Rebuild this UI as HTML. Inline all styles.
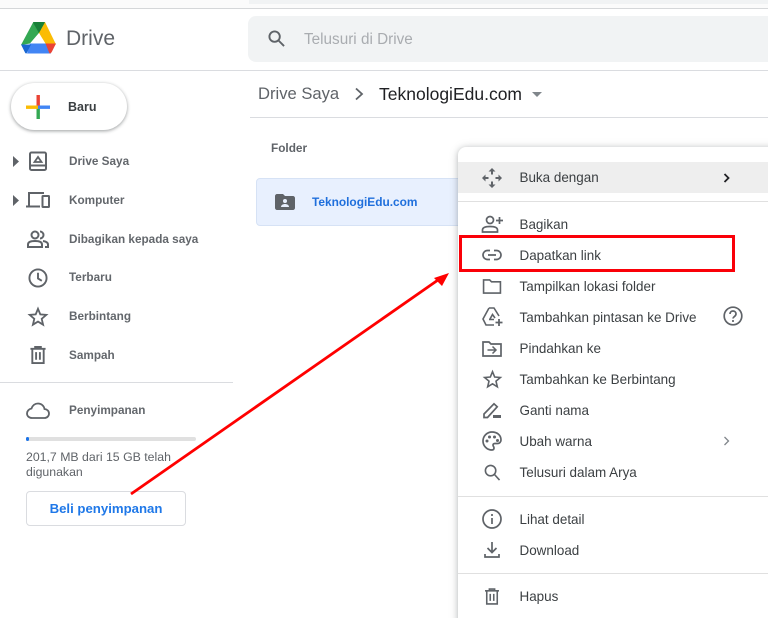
<!DOCTYPE html>
<html><head><meta charset="utf-8">
<style>
html,body{margin:0;padding:0;background:#fff}
#p{position:relative;width:768px;height:618px;overflow:hidden;background:#fff;font-family:"Liberation Sans",sans-serif}
.a{position:absolute}
.t{position:absolute;white-space:nowrap;line-height:16px}
.s{font-size:11.75px;font-weight:bold;color:#63676c;left:69px}
.m{font-size:13.45px;color:#3c4043;left:519.5px}
svg{position:absolute;overflow:visible}
</style></head><body><div id="p">

<!-- top -->
<div class="a" style="left:0;top:0;width:768px;height:8px;background:#fbfbfb"></div>
<div class="a" style="left:249px;top:0;width:519px;height:4px;background:#f1f3f4"></div>
<div class="a" style="left:0;top:8px;width:768px;height:1px;background:#d5d7d9"></div>
<div class="a" style="left:0;top:70px;width:768px;height:1px;background:#dadce0"></div>

<!-- logo -->
<svg style="left:21px;top:22px" width="35" height="32" viewBox="0 0 35 32">
<path d="M18 0H24L35 22.500H24L18 11Z" fill="#fbbc04"/>
<path d="M0 23L11.500 1.500Q12 .5 13 0H18V11L9 21.500Z" fill="#34a853"/>
<path d="M11.800 .3Q12.500 0 13.500 0H22.500Q23.500 0 24 .3L18 11Z" fill="#188038"/>
<path d="M18 11L24.500 21.500H9Z" fill="#fff"/>
<path d="M9 21.500H26L30 31.500H6Z" fill="#4285f4"/>
<path d="M24.500 21.500H35L31 29.500Q30 31.500 28.500 31.500Z" fill="#ea4335"/>
<path d="M0 22.500H10L5.500 31.500H5Q4 31 3.500 29.500Z" fill="#1967d2"/>
</svg>
<div class="t" style="left:66px;top:26px;font-size:21px;line-height:26px;color:#5f6368">Drive</div>

<!-- search -->
<div class="a" style="left:248px;top:16px;width:530px;height:46px;background:#f1f3f4;border-radius:8px"></div>
<svg style="left:268px;top:30px" width="17" height="17" viewBox="0 0 18 18" fill="none" stroke="#5f6368" stroke-width="2"><circle cx="7" cy="7" r="5.500"/><path d="M11 11l6 6"/></svg>
<div class="t" style="left:304px;top:32px;font-size:15.300px;color:#a9acb0">Telusuri di Drive</div>

<!-- new button -->
<div class="a" style="left:11px;top:83px;width:116px;height:47px;background:#fff;border-radius:24px;box-shadow:0 1px 3px rgba(60,64,67,.4),0 1px 4px rgba(60,64,67,.15)"></div>
<svg style="left:26px;top:95px" width="24" height="24" viewBox="0 0 24 24">
<rect x="10.500" y="0" width="3.400" height="12" fill="#ea4335"/>
<rect x="10.500" y="12" width="3.400" height="12" fill="#34a853"/>
<rect x="0" y="10.500" width="12" height="3.400" fill="#fbbc04"/>
<rect x="12" y="10.500" width="12" height="3.400" fill="#4285f4"/>
</svg>
<div class="t" style="left:68px;top:99px;font-size:12.500px;font-weight:bold;color:#3c4043">Baru</div>

<!-- sidebar -->
<svg style="left:13px;top:156px" width="6" height="50" viewBox="0 0 6 50" fill="#5f6368"><path d="M0 0l6 5.500-6 5.500zM0 39l6 5.500-6 5.500z"/></svg>
<svg style="left:28px;top:151px" width="20" height="20" viewBox="0 0 20 20" fill="none" stroke="#5f6368" stroke-width="2"><rect x="2" y="1.500" width="16" height="17.500" rx="1.500"/><path d="M2 14.500h16"/><path d="M6.500 11l3.500-5 3.500 5z" stroke-width="1.800"/></svg>
<svg style="left:26px;top:191px" width="24" height="18" viewBox="0 0 24 18" fill="none" stroke="#5f6368" stroke-width="2"><path d="M3 15V2h15"/><path d="M0 15.500h14" stroke-width="2"/><rect x="16.500" y="5" width="6.500" height="11" rx=".5"/></svg>
<svg style="left:27px;top:230px" width="22" height="18" viewBox="0 0 22 18" fill="none" stroke="#5f6368" stroke-width="2"><circle cx="8" cy="5" r="3.500"/><path d="M1 17v-2.500c0-2.500 3-3.500 7-3.500s7 1 7 3.500V17z"/><path d="M13 1.500a3.500 3.500 0 010 7M16 11c3 .5 5 1.500 5 3.500V17h-3"/></svg>
<svg style="left:28px;top:268px" width="20" height="20" viewBox="0 0 21 21" fill="none" stroke="#5f6368" stroke-width="2"><circle cx="10.500" cy="10.500" r="9"/><path d="M10.500 5v6l4 2.500"/></svg>
<svg style="left:28px;top:307px" width="20" height="19" viewBox="0 0 20 19" fill="none" stroke="#5f6368" stroke-width="1.800"><path d="M10 1.800l2.300 5.600 6 .5-4.600 3.900 1.400 5.900L10 14.600l-5.100 3.100 1.400-5.900L1.700 7.900l6-.5z"/></svg>
<svg style="left:30px;top:346px" width="16" height="18" viewBox="0 0 16 19" fill="none" stroke="#5f6368" stroke-width="2"><path d="M0 3h16M5 3V1h6v2"/><path d="M2 3v15h12V3M6 6.500v8M10 6.500v8"/></svg>

<div class="t s" style="top:154px">Drive Saya</div>
<div class="t s" style="top:193px">Komputer</div>
<div class="t s" style="top:232px">Dibagikan kepada saya</div>
<div class="t s" style="top:270px">Terbaru</div>
<div class="t s" style="top:309px">Berbintang</div>
<div class="t s" style="top:348px">Sampah</div>

<div class="a" style="left:0;top:382px;width:233px;height:1px;background:#dadce0"></div>

<svg style="left:26px;top:402px" width="24" height="17" viewBox="0 0 24 17" fill="none" stroke="#5f6368" stroke-width="1.800"><path d="M6 16C3 16 1 14 1 11.500S3 7 5.500 6.500C6.500 3.500 9 1.500 12 1.500c3.500 0 6 2.500 6.500 5.500 2.500.2 4.500 2 4.500 4.500S21 16 18.500 16z"/></svg>
<div class="t s" style="top:403px">Penyimpanan</div>

<div class="a" style="left:26px;top:437px;width:170px;height:4px;background:#e0e0e0;border-radius:2px"></div>
<div class="a" style="left:26px;top:437px;width:3px;height:4px;background:#1a73e8;border-radius:2px"></div>
<div class="t" style="left:26px;top:450px;font-size:12.300px;line-height:14.500px;color:#5f6368;white-space:normal;width:165px">201,7 MB dari 15 GB telah digunakan</div>

<div class="a" style="left:26px;top:491px;width:158px;height:33px;border:1px solid #dadce0;border-radius:4px;background:#fff"></div>
<div class="t" style="left:26px;width:160px;text-align:center;top:501px;font-size:13.200px;font-weight:bold;color:#1f78e8">Beli penyimpanan</div>

<!-- breadcrumb -->
<div class="t" style="left:258px;top:83px;font-size:16.600px;line-height:22px;color:#5f6368">Drive Saya</div>
<svg style="left:354px;top:87px" width="10" height="14" viewBox="0 0 10 14" fill="none" stroke="#5f6368" stroke-width="1.800"><path d="M2 1.500L8 7 2 12.500"/></svg>
<div class="t" style="left:379px;top:83px;font-size:17.500px;line-height:22px;color:#202124">TeknologiEdu.com</div>
<svg style="left:532px;top:92px" width="10" height="5" viewBox="0 0 10 5" fill="#80868b"><path d="M0 0h10L5 5z"/></svg>
<div class="a" style="left:250px;top:117px;width:518px;height:1px;background:#dadce0"></div>

<div class="t" style="left:271px;top:140px;font-size:11.800px;font-weight:bold;color:#5f6368">Folder</div>

<div class="a" style="left:256px;top:178px;width:240px;height:48px;background:#e8f0fe;border:1px solid #d6e2f5;border-radius:4px;box-sizing:border-box"></div>
<svg style="left:275px;top:194px" width="20" height="16" viewBox="0 0 20 16"><path d="M2 0h6l2 2h8c1 0 2 1 2 2v10c0 1-1 2-2 2H2c-1 0-2-1-2-2V2C0 1 1 0 2 0z" fill="#5f6368"/><circle cx="10" cy="7" r="2" fill="#e8f0fe"/><path d="M6 13c0-2 2-3 4-3s4 1 4 3z" fill="#e8f0fe"/></svg>
<div class="t" style="left:312px;top:194px;font-size:11.900px;font-weight:bold;color:#1f6fdc">TeknologiEdu.com</div>

<!-- menu -->
<div class="a" style="left:458px;top:147px;width:330px;height:490px;background:#fff;border-radius:8px;box-shadow:0 1px 6px rgba(60,64,67,.28),0 1px 10px rgba(60,64,67,.15)"></div>
<div class="a" style="left:458px;top:162px;width:310px;height:31px;background:#eeeeee"></div>
<div class="a" style="left:458px;top:201px;width:310px;height:1px;background:#e0e0e0"></div>
<div class="a" style="left:458px;top:496px;width:310px;height:1px;background:#e0e0e0"></div>
<div class="a" style="left:458px;top:573px;width:310px;height:1px;background:#e0e0e0"></div>

<svg style="left:482px;top:168px" width="20" height="20" viewBox="0 0 20 20" fill="#5f6368"><path d="M10 0l3.500 3.500h-2.500v3h-2v-3H6.500zM10 20l-3.500-3.500H9v-3h2v3h2.500zM0 10l3.500-3.500V9h3v2h-3v2.500zM20 10l-3.500 3.500V11h-3V9h3V6.500z"/></svg>
<svg style="left:481px;top:215px" width="22" height="18" viewBox="0 0 22 18" fill="none" stroke="#5f6368" stroke-width="1.700"><circle cx="9" cy="5" r="3.500"/><path d="M1.500 17v-2c0-2.500 3.500-3.500 7.500-3.500s7.500 1 7.500 3.500v2z"/><path d="M18.500 2v7M15 5.500h7"/></svg>
<svg style="left:482px;top:249px" width="20" height="12" viewBox="0 0 20 12" fill="none" stroke="#5f6368" stroke-width="1.700"><path d="M8 1.500H5.500a4.500 4.500 0 000 9H8M12 1.500h2.500a4.500 4.500 0 010 9H12M6 6h8"/></svg>
<svg style="left:482px;top:279px" width="20" height="15" viewBox="0 0 20 16" fill="none" stroke="#5f6368" stroke-width="1.700"><path d="M1 1h6.500l2 2H19v12H1z"/></svg>
<svg style="left:482px;top:307px" width="21" height="20" viewBox="0 0 21 20" fill="none" stroke="#5f6368" stroke-width="1.600"><path d="M7 1h5l5 8M7 1L1 12l3 6h8"/><path d="M8 12l2.500-4.500L13 11M7 12.500h5"/><path d="M17 12v7M13.500 15.500h7" stroke-width="1.800"/></svg>
<svg style="left:482px;top:341px" width="20" height="16" viewBox="0 0 20 16" fill="none" stroke="#5f6368" stroke-width="1.700"><path d="M1 1h6l2 2h10v12H1z"/><path d="M5.500 9h8M10.500 5.500L14 9l-3.500 3.500" stroke-width="1.500"/></svg>
<svg style="left:483px;top:370px" width="19" height="18" viewBox="0 0 20 19" fill="none" stroke="#5f6368" stroke-width="1.700"><path d="M10 1.800l2.300 5.600 6 .5-4.600 3.900 1.400 5.900L10 14.600l-5.100 3.100 1.400-5.900L1.700 7.900l6-.5z"/></svg>
<svg style="left:483px;top:403px" width="18" height="15" viewBox="0 0 18 15"><path d="M1 14.500v-3.500L11 .8l3.200 3L4.500 14.500z" fill="none" stroke="#5f6368" stroke-width="1.700"/><rect x="10" y="12" width="8" height="3" fill="#5f6368"/></svg>
<svg style="left:482px;top:431px" width="20" height="20" viewBox="0 0 20 20" fill="none" stroke="#5f6368" stroke-width="1.700"><path d="M10 1a9 9 0 000 18c1.500 0 2-1 2-2 0-1.500-1-1.500-1-3 0-1 1-1.500 2-1.500h2.500c2 0 3.500-1.500 3.500-3.500C19 4 15 1 10 1z"/><g fill="#5f6368" stroke="none"><circle cx="5" cy="10" r="1.500"/><circle cx="7.500" cy="6" r="1.500"/><circle cx="12.500" cy="6" r="1.500"/><circle cx="15.500" cy="9.500" r="1.500"/></g></svg>
<svg style="left:484px;top:464px" width="16" height="17" viewBox="0 0 17 18" fill="none" stroke="#5f6368" stroke-width="1.700"><circle cx="7" cy="7" r="5.500"/><path d="M11 11l5.500 6"/></svg>
<svg style="left:482px;top:509px" width="20" height="20" viewBox="0 0 20 20" fill="none" stroke="#5f6368" stroke-width="1.700"><circle cx="10" cy="10" r="9"/><path d="M10 9v6M10 5v2"/></svg>
<svg style="left:484px;top:542px" width="16" height="16" viewBox="0 0 16 16" fill="none" stroke="#5f6368" stroke-width="1.700"><path d="M8 0v10M3.500 6L8 10.500 12.500 6M1 12v3h14v-3"/></svg>
<svg style="left:485px;top:588px" width="14" height="17" viewBox="0 0 16 19" fill="none" stroke="#5f6368" stroke-width="1.800"><path d="M0 3h16M5 3V1h6v2"/><path d="M2 3v15h12V3M6 6.500v8M10 6.500v8"/></svg>

<div class="t m" style="top:170px">Buka dengan</div>
<div class="t m" style="top:217px">Bagikan</div>
<div class="t m" style="top:248px">Dapatkan link</div>
<div class="t m" style="top:279px">Tampilkan lokasi folder</div>
<div class="t m" style="top:310px">Tambahkan pintasan ke Drive</div>
<div class="t m" style="top:341px">Pindahkan ke</div>
<div class="t m" style="top:372px">Tambahkan ke Berbintang</div>
<div class="t m" style="top:403px">Ganti nama</div>
<div class="t m" style="top:434px">Ubah warna</div>
<div class="t m" style="top:465px">Telusuri dalam Arya</div>
<div class="t m" style="top:512px">Lihat detail</div>
<div class="t m" style="top:543px">Download</div>
<div class="t m" style="top:589px">Hapus</div>

<svg style="left:723px;top:173px" width="7" height="10" viewBox="0 0 7 10" fill="none" stroke="#202124" stroke-width="1.800"><path d="M1.500 1l4 4-4 4"/></svg>
<svg style="left:723px;top:436px" width="7" height="10" viewBox="0 0 7 10" fill="none" stroke="#80868b" stroke-width="1.300"><path d="M1.500 1l4 4-4 4"/></svg>
<svg style="left:723px;top:306px" width="20" height="20" viewBox="0 0 20 20" fill="none" stroke="#5f6368" stroke-width="1.700"><circle cx="10" cy="10" r="8.800"/><path d="M7 8c0-4 6-4 6 0 0 2.500-3 2.500-3 4.500M10 14v2"/></svg>

<!-- annotations -->
<div class="a" style="left:459px;top:235px;width:276px;height:37px;border:3px solid #fa0008;box-sizing:border-box"></div>
<svg style="left:0;top:0" width="768" height="618" viewBox="0 0 768 618">
<path d="M131 494L438 280" stroke="#f00" stroke-width="2.800" fill="none"/>
<path d="M449 273L434 278 442 286Z" fill="#f00"/>
</svg>

</div></body></html>
